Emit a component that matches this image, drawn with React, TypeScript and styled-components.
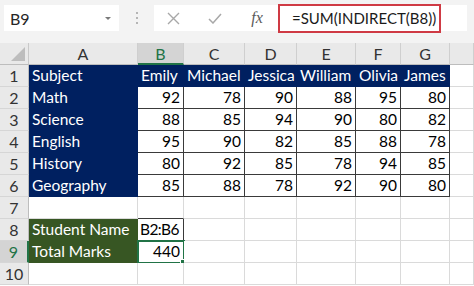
import React from 'react'
import styled, { createGlobalStyle, css } from 'styled-components'

const GlobalStyle = createGlobalStyle`
    html, body {
        margin: 0;
        padding: 0;
        background: #f3f3f3;
        font-family: Lato, 'Noto Sans', sans-serif;
        overflow: hidden;
    }
`

// Formula bar
const Page = styled.div`
    width: 474px;
    height: 286px;
    display: flex;
    flex-direction: column;
`

const Toolbar = styled.div`
    height: 43px;
    display: flex;
    align-items: flex-start;
    padding: 5px 7px 0 4px;
    box-sizing: border-box;
`

const NameBox = styled.div`
    width: 115px;
    height: 26px;
    background: #ffffff;
    display: flex;
    align-items: center;
    justify-content: space-between;
    padding: 0 8px 0 6px;
    box-sizing: border-box;
    font-size: 16px;
    color: #262626;
`

const Caret = styled.span`
    width: 0;
    height: 0;
    border-left: 3px solid transparent;
    border-right: 3px solid transparent;
    border-top: 3px solid #7a7a7a;
`

const Dots = styled.div`
    width: 35px;
    height: 26px;
    display: flex;
    flex-direction: column;
    align-items: center;
    justify-content: center;
    gap: 3px;

    span {
        width: 2px;
        height: 2px;
        border-radius: 1px;
        background: #a0a0a0;
    }
`

const FormulaBox = styled.div`
    flex: 1;
    height: 26px;
    background: #ffffff;
    display: flex;
    align-items: center;
`

const IconSlot = styled.div<{ $w: number }>`
    width: ${(p) => p.$w}px;
    display: flex;
    justify-content: center;
    align-items: center;
`

const Fx = styled.span`
    font-family: 'Liberation Serif', serif;
    font-style: italic;
    font-size: 16px;
    color: #5a5a5a;
`

const Formula = styled.div`
    margin-left: 2px;
    height: 29px;
    box-sizing: border-box;
    border: 2px solid #cf3a44;
    display: flex;
    align-items: center;
    padding: 0 3px 0 12px;
    font-size: 15px;
    color: #1a1a1a;
    white-space: nowrap;
`

// Sheet
const Sheet = styled.div`
    flex: 1;
    display: grid;
    grid-template-columns: 29px 109px 46px 61px 52px 59px 45px 49px 1fr;
    grid-auto-rows: 22px;
    background: #ffffff;
`

const headerBase = css`
    background: #e9e9e9;
    color: #333333;
    font-size: 16px;
    display: flex;
    align-items: center;
    justify-content: center;
    box-sizing: border-box;
`

const Corner = styled.div`
    ${headerBase};
    border-right: 1px solid #c9c9c9;
    border-bottom: 1px solid #bdbdbd;
    align-items: flex-end;
    justify-content: flex-end;
    padding: 0 3px 3px 0;
`

const ColHead = styled.div<{ $selected?: boolean }>`
    ${headerBase};
    border-right: 1px solid #cfcfcf;
    border-bottom: 1px solid #bdbdbd;
    ${(p) =>
        p.$selected &&
        css`
            background: #d4d4d4;
            color: #217346;
            border-bottom: 2px solid #217346;
        `}
`

const RowHead = styled.div<{ $selected?: boolean }>`
    ${headerBase};
    border-right: 1px solid #bdbdbd;
    border-bottom: 1px solid #d6d6d6;
    ${(p) =>
        p.$selected &&
        css`
            background: #d4d4d4;
            color: #217346;
            border-right: 2px solid #217346;
        `}
`

type Kind = 'empty' | 'navy' | 'green' | 'data'

const edgeColor: Record<Kind, string> = {
    empty: '#dadada',
    navy: '#002060',
    green: '#375623',
    data: '#3a3a3a',
}

const fillColor: Record<Kind, string> = {
    empty: '#ffffff',
    navy: '#002060',
    green: '#375623',
    data: '#ffffff',
}

const Cell = styled.div<{
    $kind: Kind
    $right?: boolean
    $darkBottom?: boolean
    $active?: boolean
    $tight?: boolean
}>`
    position: relative;
    box-sizing: border-box;
    background: ${(p) => fillColor[p.$kind]};
    color: ${(p) => (p.$kind === 'navy' || p.$kind === 'green' ? '#ffffff' : '#000000')};
    border-right: 1px solid ${(p) => edgeColor[p.$kind]};
    border-bottom: 1px solid ${(p) => (p.$darkBottom ? '#3a3a3a' : edgeColor[p.$kind])};
    font-size: 15.5px;
    line-height: 21px;
    padding: ${(p) => (p.$tight ? '0 1px 0 2px' : '0 3px')};
    letter-spacing: ${(p) => (p.$tight ? '-0.6px' : 'normal')};
    text-align: ${(p) => (p.$right ? 'right' : 'left')};
    white-space: nowrap;
    ${(p) =>
        p.$active &&
        css`
            outline: 2px solid #217346;
            outline-offset: -1px;
        `}
`

const FillHandle = styled.span`
    position: absolute;
    right: -4px;
    bottom: -4px;
    width: 5px;
    height: 5px;
    background: #217346;
    border: 1px solid #ffffff;
`

const columns = ['A', 'B', 'C', 'D', 'E', 'F', 'G', '']

const table: (string | number)[][] = [
    ['Subject', 'Emily', 'Michael', 'Jessica', 'William', 'Olivia', 'James'],
    ['Math', 92, 78, 90, 88, 95, 80],
    ['Science', 88, 85, 94, 90, 80, 82],
    ['English', 95, 90, 82, 85, 88, 78],
    ['History', 80, 92, 85, 78, 94, 85],
    ['Geography', 85, 88, 78, 92, 90, 80],
]

const CrossIcon = () => (
    <svg width="13" height="13" viewBox="0 0 13 13">
        <path d="M1 1 L12 12 M12 1 L1 12" stroke="#a8a8a8" strokeWidth="1.4" fill="none" />
    </svg>
)

const CheckIcon = () => (
    <svg width="14" height="11" viewBox="0 0 14 11">
        <path d="M1 6 L5 10 L13 1" stroke="#a8a8a8" strokeWidth="1.5" fill="none" />
    </svg>
)

const CornerMark = () => (
    <svg width="14" height="14" viewBox="0 0 14 14">
        <polygon points="14,0 14,14 0,14" fill="#bdbdbd" />
    </svg>
)

const renderRow = (r: number) => {
    const cells: JSX.Element[] = []
    for (let c = 0; c < 8; c++) {
        const key = `${r}-${c}`
        if (r <= 6 && c < 7) {
            const value = table[r - 1][c]
            const kind: Kind = r === 1 || c === 0 ? 'navy' : 'data'
            cells.push(
                <Cell key={key} $kind={kind} $right={typeof value === 'number'}>
                    {value}
                </Cell>
            )
        } else if (r === 8 && c === 0) {
            cells.push(<Cell key={key} $kind="green">Student Name</Cell>)
        } else if (r === 8 && c === 1) {
            cells.push(
                <Cell key={key} $kind="data" $tight>
                    B2:B6
                </Cell>
            )
        } else if (r === 9 && c === 0) {
            cells.push(<Cell key={key} $kind="green">Total Marks</Cell>)
        } else if (r === 9 && c === 1) {
            cells.push(
                <Cell key={key} $kind="empty" $right $active>
                    440
                    <FillHandle />
                </Cell>
            )
        } else {
            cells.push(<Cell key={key} $kind="empty" $darkBottom={r === 7 && c === 1} />)
        }
    }
    return cells
}

const App: React.FC = (): JSX.Element => {
    return (
        <Page>
            <GlobalStyle />
            <Toolbar>
                <NameBox>
                    B9
                    <Caret />
                </NameBox>
                <Dots>
                    <span />
                    <span />
                    <span />
                </Dots>
                <FormulaBox>
                    <IconSlot $w={38}>
                        <CrossIcon />
                    </IconSlot>
                    <IconSlot $w={46}>
                        <CheckIcon />
                    </IconSlot>
                    <IconSlot $w={38}>
                        <Fx>fx</Fx>
                    </IconSlot>
                    <Formula>=SUM(INDIRECT(B8))</Formula>
                </FormulaBox>
            </Toolbar>
            <Sheet>
                <Corner>
                    <CornerMark />
                </Corner>
                {columns.map((col) => (
                    <ColHead key={col || 'H'} $selected={col === 'B'}>
                        {col}
                    </ColHead>
                ))}
                {Array.from({ length: 10 }, (_, i) => i + 1).map((r) => (
                    <React.Fragment key={r}>
                        <RowHead $selected={r === 9}>{r}</RowHead>
                        {renderRow(r)}
                    </React.Fragment>
                ))}
            </Sheet>
        </Page>
    )
}

export default App
